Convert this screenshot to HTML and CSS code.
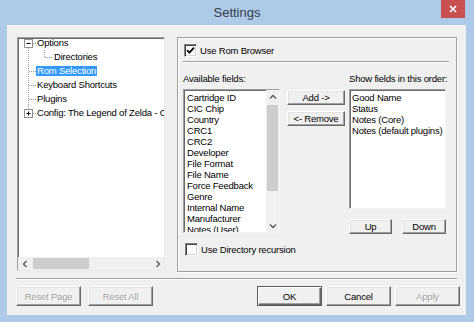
FILE: index.html
```html
<!DOCTYPE html>
<html lang="en">
<head>
<meta charset="utf-8">
<title>Settings</title>
<link rel="stylesheet" href="styles.css">
</head>
<body>
<div class="window">
  <div class="titlebar">
    <span class="title">Settings</span>
    <div class="close">
      <svg width="8" height="8" viewBox="0 0 8 8"><path d="M1 1 L7 7 M7 1 L1 7" stroke="#fff" stroke-width="1.6" fill="none"/></svg>
    </div>
  </div>
  <div class="client">
    <div class="main">
      <div class="tree">
        <ul class="tree-list">
          <li class="node">
            <svg class="gutter" width="18" height="14" viewBox="0 0 18 14">
              <rect x="6.5" y="3.5" width="8" height="8" fill="#fff" stroke="#919191"/>
              <path d="M8.5 7.5 H12.5" stroke="#000"/>
              <path d="M10.5 12 V14 M15 7.5 H18" stroke="#9a9a9a" stroke-dasharray="1 1"/>
            </svg>
            <span class="label">Options</span>
          </li>
          <li class="node">
            <svg class="gutter" width="35" height="14" viewBox="0 0 35 14">
              <path d="M10.5 0 V14 M26.5 0 V7.5 M27 7.5 H35" stroke="#9a9a9a" stroke-dasharray="1 1"/>
            </svg>
            <span class="label">Directories</span>
          </li>
          <li class="node">
            <svg class="gutter" width="18" height="14" viewBox="0 0 18 14">
              <path d="M10.5 0 V14 M11 7.5 H18" stroke="#9a9a9a" stroke-dasharray="1 1"/>
            </svg>
            <span class="label selected">Rom Selection</span>
          </li>
          <li class="node">
            <svg class="gutter" width="18" height="14" viewBox="0 0 18 14">
              <path d="M10.5 0 V14 M11 7.5 H18" stroke="#9a9a9a" stroke-dasharray="1 1"/>
            </svg>
            <span class="label">Keyboard Shortcuts</span>
          </li>
          <li class="node">
            <svg class="gutter" width="18" height="14" viewBox="0 0 18 14">
              <path d="M10.5 0 V14 M11 7.5 H18" stroke="#9a9a9a" stroke-dasharray="1 1"/>
            </svg>
            <span class="label">Plugins</span>
          </li>
          <li class="node">
            <svg class="gutter" width="18" height="14" viewBox="0 0 18 14">
              <path d="M10.5 0 V3 M15 7.5 H18" stroke="#9a9a9a" stroke-dasharray="1 1"/>
              <rect x="6.5" y="3.5" width="8" height="8" fill="#fff" stroke="#919191"/>
              <path d="M8.5 7.5 H12.5 M10.5 5.5 V9.5" stroke="#000"/>
            </svg>
            <span class="label">Config: The Legend of Zelda - Ocarina of Time</span>
          </li>
        </ul>
        <div class="hscroll">
          <div class="arrow">
            <svg width="6" height="8" viewBox="0 0 6 8"><path d="M4.5 1 L1.5 4 L4.5 7" stroke="#555" stroke-width="1.3" fill="none"/></svg>
          </div>
          <div class="htrack"><div class="hthumb"></div></div>
          <div class="arrow">
            <svg width="6" height="8" viewBox="0 0 6 8"><path d="M1.5 1 L4.5 4 L1.5 7" stroke="#555" stroke-width="1.3" fill="none"/></svg>
          </div>
        </div>
      </div>

      <div class="panel">
        <div class="check-row">
          <span class="checkbox">
            <svg width="9" height="9" viewBox="0 0 9 9"><path d="M1 4.2 L3.4 6.6 L8 1.6" stroke="#000" stroke-width="1.8" fill="none"/></svg>
          </span>
          <span>Use Rom Browser</span>
        </div>
        <div class="etched"></div>
        <div class="fields">
          <div class="col col-left">
            <div class="field-label">Available fields:</div>
            <div class="listbox list-left">
              <ul class="items">
                <li>Cartridge ID</li>
                <li>CIC Chip</li>
                <li>Country</li>
                <li>CRC1</li>
                <li>CRC2</li>
                <li>Developer</li>
                <li>File Format</li>
                <li>File Name</li>
                <li>Force Feedback</li>
                <li>Genre</li>
                <li>Internal Name</li>
                <li>Manufacturer</li>
                <li>Notes (User)</li>
                <li>Players</li>
              </ul>
              <div class="vscroll">
                <div class="varrow">
                  <svg width="8" height="6" viewBox="0 0 8 6"><path d="M1 4.5 L4 1.5 L7 4.5" stroke="#555" stroke-width="1.3" fill="none"/></svg>
                </div>
                <div class="vtrack"><div class="vthumb"></div></div>
                <div class="varrow">
                  <svg width="8" height="6" viewBox="0 0 8 6"><path d="M1 1.5 L4 4.5 L7 1.5" stroke="#555" stroke-width="1.3" fill="none"/></svg>
                </div>
              </div>
            </div>
            <div class="check-row bottom-check">
              <span class="checkbox"></span>
              <span>Use Directory recursion</span>
            </div>
          </div>
          <div class="col col-mid">
            <button class="btn small">Add -&gt;</button>
            <button class="btn small">&lt;- Remove</button>
          </div>
          <div class="col col-right">
            <div class="field-label">Show fields in this order:</div>
            <div class="listbox list-right">
              <ul class="items">
                <li>Good Name</li>
                <li>Status</li>
                <li>Notes (Core)</li>
                <li>Notes (default plugins)</li>
              </ul>
            </div>
            <div class="updown">
              <button class="btn small up">Up</button>
              <button class="btn small down">Down</button>
            </div>
          </div>
        </div>
      </div>
    </div>

    <div class="etched bottom-sep"></div>

    <div class="buttons">
      <div class="group">
        <button class="btn big disabled">Reset Page</button>
        <button class="btn big disabled">Reset All</button>
      </div>
      <div class="group right">
        <button class="btn big default">OK</button>
        <button class="btn big">Cancel</button>
        <button class="btn big disabled">Apply</button>
      </div>
    </div>
  </div>
</div>
</body>
</html>
```

FILE: styles.css
```css
* {
  box-sizing: border-box;
  margin: 0;
  padding: 0;
}

html, body {
  width: 474px;
  height: 322px;
  overflow: hidden;
}

body {
  font-family: "Liberation Sans", Arial, sans-serif;
  font-size: 9.5px;
  letter-spacing: -0.2px;
  color: #000;
}

ul {
  list-style: none;
}

.window {
  width: 474px;
  height: 322px;
  background: #aecae8;
  display: flex;
  flex-direction: column;
  padding: 0 8px 7px 7px;
}

.titlebar {
  height: 25px;
  margin: 0 -8px 0 -7px;
  display: grid;
  grid-template-columns: 1fr auto 1fr;
}

.title {
  grid-column: 2;
  align-self: center;
  font-size: 13px;
  letter-spacing: 0;
  color: #36404d;
  margin-top: -1px;
}

.close {
  grid-column: 3;
  justify-self: end;
  width: 24px;
  height: 18px;
  margin-right: 9px;
  background: #c8504f;
  display: flex;
  align-items: center;
  justify-content: center;
}

.close svg {
  display: block;
}

.client {
  flex: 1;
  background: #f0f0f0;
  display: flex;
  flex-direction: column;
  padding-top: 12px;
}

.main {
  display: flex;
  gap: 12px;
  margin-left: 10px;
  height: 235px;
}

/* Tree */
.tree {
  width: 148px;
  height: 234px;
  background: #fff;
  border: 1px solid;
  border-color: #a0a0a0 #e8e8e8 #e8e8e8 #a0a0a0;
  box-shadow: inset 1px 1px 0 #696969;
  display: flex;
  flex-direction: column;
  overflow: hidden;
}

.tree-list {
  flex: 1;
  margin-top: -2px;
  overflow: hidden;
}

.node {
  height: 14px;
  display: flex;
  align-items: center;
  white-space: nowrap;
}

.gutter {
  display: block;
  flex: none;
}

.label {
  padding: 0 1px;
  line-height: 10px;
  height: 10px;
  display: block;
}

.label.selected {
  background: #3399ff;
  color: #fff;
}

.hscroll {
  height: 13px;
  flex: none;
  background: #f0f0f0;
  display: flex;
  align-items: center;
}

.arrow {
  width: 13px;
  height: 13px;
  display: flex;
  align-items: center;
  justify-content: center;
  flex: none;
}

.htrack {
  flex: 1;
  height: 13px;
  display: flex;
  align-items: center;
}

.hthumb {
  margin-left: 2px;
  width: 56px;
  height: 11px;
  background: #cdcdcd;
}

/* Right panel */
.panel {
  width: 280px;
  height: 235px;
  border: 1px solid #a0a0a0;
  box-shadow: inset 1px 1px 0 #fff, 1px 1px 0 #fff;
  padding: 6px 6px 0 5px;
  display: flex;
  flex-direction: column;
}

.check-row {
  display: flex;
  align-items: center;
  gap: 3px;
  height: 13px;
  padding-left: 1px;
  white-space: nowrap;
}

.checkbox {
  width: 13px;
  height: 13px;
  flex: none;
  background: #fff;
  border: 1px solid;
  border-color: #808080 #fff #fff #808080;
  box-shadow: inset 1px 1px 0 #404040, inset -1px -1px 0 #d4d4d4;
  display: flex;
  align-items: center;
  justify-content: center;
}

.checkbox svg {
  display: block;
}

.etched {
  height: 2px;
  border-top: 1px solid #a0a0a0;
  border-bottom: 1px solid #fff;
}

.panel .etched {
  margin-top: 4px;
  margin-right: 1px;
}

.fields {
  display: flex;
}

.col {
  display: flex;
  flex-direction: column;
}

.col-left {
  width: 97px;
}

.col-mid {
  width: 58px;
  margin-left: 7px;
  padding-top: 27px;
  gap: 6px;
}

.col-right {
  width: 97px;
  margin-left: 4px;
}

.field-label {
  height: 26px;
  padding-top: 10px;
  line-height: 12px;
  white-space: nowrap;
}

.listbox {
  background: #fff;
  border: 1px solid;
  border-color: #a0a0a0 #f4f4f4 #f4f4f4 #a0a0a0;
  box-shadow: inset 1px 1px 0 #696969;
  display: flex;
  overflow: hidden;
}

.list-left {
  height: 144px;
}

.list-right {
  height: 120px;
}

.items {
  flex: 1;
  padding: 2px 0 0 3px;
  overflow: hidden;
}

.list-right .items {
  padding-left: 2px;
}

.items li {
  height: 11px;
  line-height: 11px;
  white-space: nowrap;
}

.vscroll {
  width: 13px;
  flex: none;
  background: #f0f0f0;
  display: flex;
  flex-direction: column;
}

.varrow {
  height: 13px;
  flex: none;
  display: flex;
  align-items: center;
  justify-content: center;
}

.vtrack {
  flex: 1;
  display: flex;
  flex-direction: column;
  align-items: center;
}

.vthumb {
  margin-top: 2px;
  width: 11px;
  height: 86px;
  background: #cdcdcd;
}

.bottom-check {
  margin-top: 10px;
  padding-left: 2px;
}

.updown {
  display: flex;
  gap: 10px;
  margin-top: 10px;
}

/* Buttons */
.btn {
  font: inherit;
  letter-spacing: inherit;
  color: #000;
  background: #f0f0f0;
  border: 1px solid;
  border-color: #fff #696969 #696969 #fff;
  box-shadow: inset -1px -1px 0 #a0a0a0, inset 1px 1px 0 #e3e3e3;
  display: flex;
  align-items: center;
  justify-content: center;
  white-space: nowrap;
}

.btn.small {
  height: 15px;
  width: 58px;
}

.btn.up {
  width: 43px;
}

.btn.down {
  width: 44px;
}

.btn.big {
  width: 65px;
  height: 20px;
}

.btn.default {
  border-color: #5a5a5a;
  box-shadow: inset 1px 1px 0 #fff, inset -1px -1px 0 #696969, inset -2px -2px 0 #a0a0a0;
}

.btn.disabled {
  color: #a0a0a0;
  text-shadow: 1px 1px 0 #fff;
}

.bottom-sep {
  margin: 6px 9px 0 9px;
}

.buttons {
  display: flex;
  justify-content: space-between;
  margin: 6px 6px 0 9px;
}

.group {
  display: flex;
  gap: 7px;
}

.group.right {
  gap: 4px;
}
```
